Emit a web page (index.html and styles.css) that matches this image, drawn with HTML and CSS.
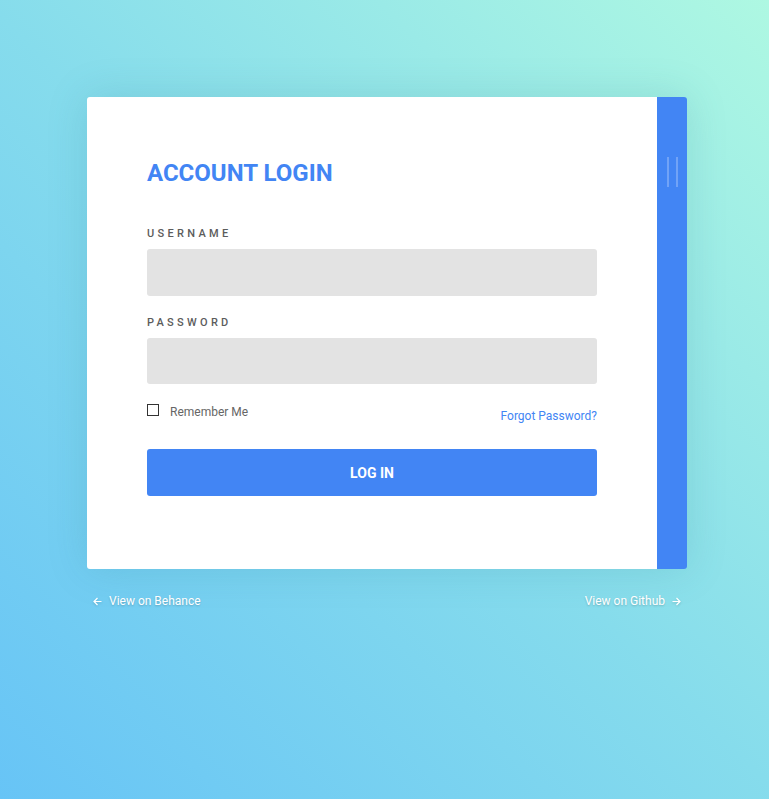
FILE: index.html
```html
<!DOCTYPE html>
<html>
<head>
<meta charset="utf-8">
<link rel="stylesheet" href="styles.css">
</head>
<body>
<div class="wrap">
  <div class="card">
    <div class="main">
      <h1 class="title">ACCOUNT LOGIN</h1>
      <label class="label">USERNAME</label>
      <div class="input"></div>
      <label class="label pw">PASSWORD</label>
      <div class="input"></div>
      <div class="row">
        <div class="remember"><span class="box"></span><span class="rtext">Remember Me</span></div>
        <a class="forgot">Forgot Password?</a>
      </div>
      <div class="btn">LOG IN</div>
    </div>
    <div class="strip"><span class="bars"><i></i><i></i></span></div>
  </div>
  <div class="links">
    <a class="link"><svg class="arr" width="9" height="9" viewBox="0 0 9 9"><path d="M8.5 4.5H1M4.5 1L1 4.5L4.5 8" fill="none" stroke="#fff" stroke-width="1.2"/></svg>View on Behance</a>
    <a class="link">View on Github<svg class="arr r" width="9" height="9" viewBox="0 0 9 9"><path d="M0.5 4.5H8M4.5 1L8 4.5L4.5 8" fill="none" stroke="#fff" stroke-width="1.2"/></svg></a>
  </div>
</div>
</body>
</html>
```
FILE: styles.css
```css
html, body { margin: 0; height: 100%; }
body {
  background: linear-gradient(45deg, #67c4f6 0%, #86dcec 50%, #aef8e2 100%);
  font-family: Roboto, "Liberation Sans", sans-serif;
}
.wrap { width: 600px; padding: 97px 0 0 87px; }
.card {
  display: flex;
  height: 472px;
  border-radius: 3px;
  box-shadow: 0 0 40px rgba(40, 120, 140, 0.18);
}
.main {
  flex: 1;
  background: #fff;
  border-radius: 3px 0 0 3px;
  padding: 61px 60px 0 60px;
}
.title {
  margin: 0 0 39px;
  font-size: 24px;
  line-height: 30px;
  font-weight: 700;
  color: #4285f4;
}
.label {
  display: block;
  font-size: 11px;
  line-height: 13px;
  font-weight: 500;
  letter-spacing: 3.3px;
  color: #5c5c5c;
  margin-bottom: 9px;
}
.label.pw { margin-top: 20px; }
.input {
  height: 47px;
  background: #e3e3e3;
  border-radius: 3px;
}
.input + .label + .input { height: 46px; }
.row {
  display: flex;
  justify-content: space-between;
  align-items: flex-start;
  margin-top: 20px;
  height: 45px;
}
.remember {
  display: flex;
  align-items: flex-start;
  font-size: 12px;
  color: #666;
  line-height: 14px;
}
.box {
  width: 10px; height: 10px;
  border: 1px solid #333;
  margin-right: 11px;
}
.rtext { margin-top: 1px; }
.forgot {
  font-size: 12px;
  color: #4285f4;
  line-height: 14px;
  margin-top: 5px;
}
.btn {
  height: 47px;
  background: #4285f4;
  border-radius: 3px;
  color: #fff;
  font-size: 14px;
  font-weight: 700;
  display: flex;
  align-items: center;
  justify-content: center;
}
.strip {
  width: 30px;
  background: #4285f4;
  border-radius: 0 3px 3px 0;
  display: flex;
  justify-content: center;
  padding-top: 60px;
}
.bars { display: flex; gap: 7px; height: 30px; margin-left: 0; }
.bars i { width: 2px; background: rgba(255,255,255,0.25); }
.links {
  display: flex;
  justify-content: space-between;
  padding: 24px 6px 0;
}
.link {
  color: #fff;
  font-size: 12px;
  line-height: 16px;
  text-shadow: 0 1px 2px rgba(0,0,0,0.2);
  display: flex;
  align-items: center;
}
.arr { margin-right: 7px; filter: drop-shadow(0 1px 1px rgba(0,0,0,0.15)); }
.arr.r { margin-right: 0; margin-left: 7px; }
```
